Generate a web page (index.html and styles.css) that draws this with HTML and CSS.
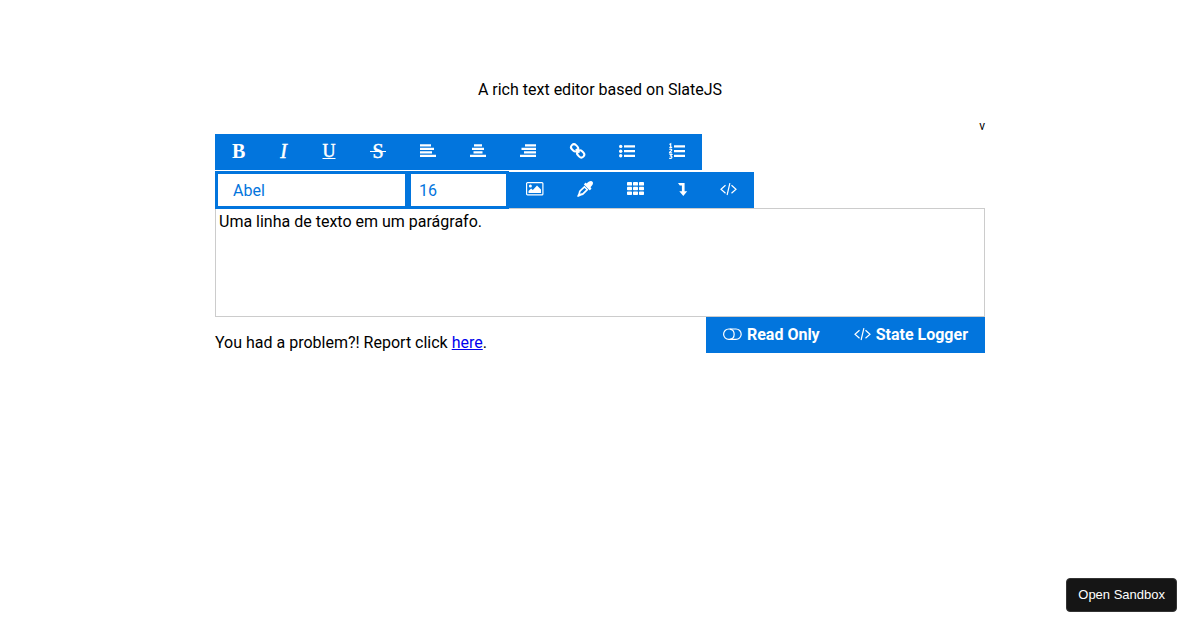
FILE: index.html
```html
<!DOCTYPE html>
<html lang="en">
<head>
<meta charset="utf-8">
<title>Rich text editor</title>
<link rel="stylesheet" href="styles.css">
</head>
<body>
<main class="page">
  <p class="title">A rich text editor based on SlateJS</p>
  <div class="version">v</div>

  <div class="toolbar toolbar-format">
    <button class="tool" type="button" aria-label="Bold"><span class="letter letter-b">B</span></button>
    <button class="tool" type="button" aria-label="Italic"><span class="letter letter-i">I</span></button>
    <button class="tool" type="button" aria-label="Underline"><span class="letter letter-u">U</span></button>
    <button class="tool" type="button" aria-label="Strikethrough"><span class="letter letter-s">S</span></button>
    <button class="tool" type="button" aria-label="Align left"><svg class="icon" width="16" height="16" viewBox="0 0 16 16"><path d="M0 1.200h11v2.200H0zM0 4.800h14v2.200H0zM0 8.200h12v2.200H0zM0 11.700h16v2.200H0z"/></svg></button>
    <button class="tool" type="button" aria-label="Align center"><svg class="icon" width="16" height="16" viewBox="0 0 16 16"><path d="M4 1.200h8v2.200H4zM2 4.800h12v2.200H2zM3.500 8.200h9v2.200h-9zM0 11.700h16v2.200H0z"/></svg></button>
    <button class="tool" type="button" aria-label="Align right"><svg class="icon" width="16" height="16" viewBox="0 0 16 16"><path d="M5 1.200h11v2.200H5zM1.500 4.800H16v2.200H1.500zM4 8.200h12v2.200H4zM0 11.700h16v2.200H0z"/></svg></button>
    <button class="tool" type="button" aria-label="Link"><svg class="icon icon-line" width="15" height="16" viewBox="0 0 15 16"><g transform="rotate(45 7.5 8)" stroke-width="2"><rect x="-.6" y="4.900" width="7.600" height="5.800" rx="2.900"/><rect x="8" y="4.900" width="7.600" height="5.800" rx="2.900"/><path d="M5 7.800h5"/></g></svg></button>
    <button class="tool" type="button" aria-label="Bulleted list"><svg class="icon" width="16" height="16" viewBox="0 0 16 16"><circle cx="1.700" cy="3.400" r="1.700"/><circle cx="1.700" cy="8.200" r="1.700"/><circle cx="1.700" cy="12.800" r="1.700"/><path d="M5 2.300h11v2.200H5zM5 7h11v2.200H5zM5 11.700h11v2.200H5z"/></svg></button>
    <button class="tool" type="button" aria-label="Numbered list"><svg class="icon" width="16" height="16" viewBox="0 0 16 16"><path d="M5 2.300h11v2.200H5zM5 7h11v2.200H5zM5 11.700h11v2.200H5z"/><path class="thin" d="M.4 1.500l1.300-.8v3.600M.3 4.400h2.900M.4 6.500c.6-.6 2.400-.6 2.400.5S.5 8.500.5 9.800H3.100M.4 11.500h2.400L1.600 13c1.800 0 1.600 2.400.1 2.400-.6 0-1-.1-1.400-.4"/></svg></button>
  </div>

  <div class="toolbar toolbar-insert">
    <select class="field field-font" aria-label="Font family"><option>Abel</option></select>
    <select class="field field-size" aria-label="Font size"><option>16</option></select>
    <button class="tool" type="button" aria-label="Image"><svg class="icon" width="17" height="16" viewBox="0 0 17 16"><rect class="outline" x=".6" y="1.600" width="16.300" height="12.300" rx="1"/><circle cx="4.400" cy="5" r="1.500"/><path d="M2.500 12V10l2.600-2.400 1.700 1.500L11 4.600l4 3.900V12z"/></svg></button>
    <button class="tool" type="button" aria-label="Text color"><svg class="icon" width="16" height="16" viewBox="0 0 16 16"><path d="M9.700 2.600C11 1.200 12.300 0 14 0c1.200 0 2 1 2 2.100 0 1.600-1.300 2.900-2.500 4.100l.7.8c.3.3.2.6 0 .9l-1 1c-.3.3-.6.3-.9 0L7.200 3.800c-.3-.3-.3-.6 0-.9l1-1c.3-.3.6-.3.9 0z"/><path fill-rule="evenodd" d="M7.400 4.700l4 4-5 5c-.5.5-1.400.7-2.200.7L1 16l-.9-.8 1.500-3.100c0-.9.200-1.900.8-2.500zM7.400 6.900L4 10.300c-.6.6-.7 1.200-.7 2.400 1.200 0 1.800-.1 2.300-.6l3.600-3.500z"/></svg></button>
    <button class="tool" type="button" aria-label="Grid"><svg class="icon" width="17" height="16" viewBox="0 0 17 16"><rect x="0" y="1" width="5" height="3.600" rx=".7"/><rect x="6" y="1" width="5" height="3.600" rx=".7"/><rect x="12" y="1" width="5" height="3.600" rx=".7"/><rect x="0" y="5.700" width="5" height="3.600" rx=".7"/><rect x="6" y="5.700" width="5" height="3.600" rx=".7"/><rect x="12" y="5.700" width="5" height="3.600" rx=".7"/><rect x="0" y="10.400" width="5" height="3.600" rx=".7"/><rect x="6" y="10.400" width="5" height="3.600" rx=".7"/><rect x="12" y="10.400" width="5" height="3.600" rx=".7"/></svg></button>
    <button class="tool" type="button" aria-label="Line break"><svg class="icon" width="8" height="16" viewBox="0 0 8 16"><path d="M0 2h6.600v8.300H9.200L5.300 15 1.300 10.300H3.900V4.500H1.800z"/></svg></button>
    <button class="tool" type="button" aria-label="Code"><svg class="icon icon-line" width="17" height="16" viewBox="0 0 17 16"><path d="M5.500 4.200L1 8.200l4.500 4M11.500 4.200l4.500 4-4.500 4M9.900 2.200L7.100 14"/></svg></button>
  </div>

  <div class="editor" contenteditable="true" role="textbox" aria-label="Content" spellcheck="false">Uma linha de texto em um parágrafo.</div>

  <div class="footer">
    <p class="report">You had a problem?! Report click <a href="#">here</a>.</p>
    <div class="toolbar">
      <button class="tool" type="button"><svg class="icon icon-line" width="19" height="16" viewBox="0 0 19 16"><rect x=".6" y="3" width="17.600" height="10.400" rx="5.200"/><path d="M6.800 3.100c5.800.6 5.800 9.600 0 10.200"/></svg>Read Only</button>
      <button class="tool" type="button"><svg class="icon icon-line" width="17" height="16" viewBox="0 0 17 16"><path d="M5.500 4.200L1 8.200l4.500 4M11.500 4.200l4.500 4-4.500 4M9.900 2.200L7.100 14"/></svg>State Logger</button>
    </div>
  </div>
</main>
<button class="sandbox" type="button">Open Sandbox</button>
</body>
</html>
```
FILE: styles.css
```css
body {
  margin: 0;
  background: #fff;
  color: #000;
  font: 16px/19px Roboto, sans-serif;
}

.page {
  max-width: 770px;
  margin: 0 auto;
  padding-top: 80px;
}

.title {
  margin: 0 0 20px;
  text-align: center;
}

.version {
  height: 15px;
  font-size: 12px;
  line-height: 15px;
  text-align: right;
}

.toolbar {
  display: flex;
  align-items: center;
  width: fit-content;
  background: #0275dd;
}

.toolbar-format {
  margin-bottom: 2px;
}

.tool {
  display: flex;
  align-items: center;
  gap: 5px;
  height: 36px;
  margin: 0;
  padding: 0 17px 2px;
  border: 0;
  background: transparent;
  color: #fff;
  font: bold 16px/19px Roboto, sans-serif;
  white-space: nowrap;
  cursor: pointer;
}

.icon {
  display: block;
  flex: none;
  overflow: visible;
  fill: #fff;
}

.icon-line,
.outline,
.thin {
  fill: none;
  stroke: #fff;
  stroke-width: 1.2;
}

.letter {
  display: block;
  font: 20px/20px "Liberation Serif", serif;
  text-align: center;
  -webkit-text-stroke: 0.5px #fff;
}

.letter-b {
  width: 13px;
  font-weight: bold;
  -webkit-text-stroke: 0;
}

.letter-i {
  width: 9px;
  font-style: italic;
}

.letter-u {
  width: 14px;
  font-size: 18px;
  text-decoration: underline;
}

.letter-s {
  width: 16px;
  background: linear-gradient(#fff, #fff) center / 100% 1px no-repeat;
}

.field {
  appearance: none;
  height: 38px;
  margin: -1px 0;
  border: 3px solid #0275dd;
  border-radius: 0;
  background: #fff;
  color: #0275dd;
  font: 16px/19px Roboto, sans-serif;
  position: relative;
}

.field-font {
  width: 193px;
  padding: 0 15px;
}

.field-size {
  width: 101px;
  padding: 0 8px;
}

.editor {
  box-sizing: border-box;
  min-height: 109px;
  padding: 3px;
  border: 1px solid #ccc;
}

.footer {
  display: flex;
  justify-content: space-between;
  align-items: flex-start;
}

.report {
  margin: 16px 0;
}

.report a {
  color: #00e;
}

.sandbox {
  position: fixed;
  right: 23px;
  bottom: 18px;
  height: 34px;
  padding: 0 11px 1px;
  border: 1px solid #343434;
  border-radius: 4px;
  background: #151515;
  color: #fff;
  font: 13px/17px "Liberation Sans", Arial, sans-serif;
}
```
